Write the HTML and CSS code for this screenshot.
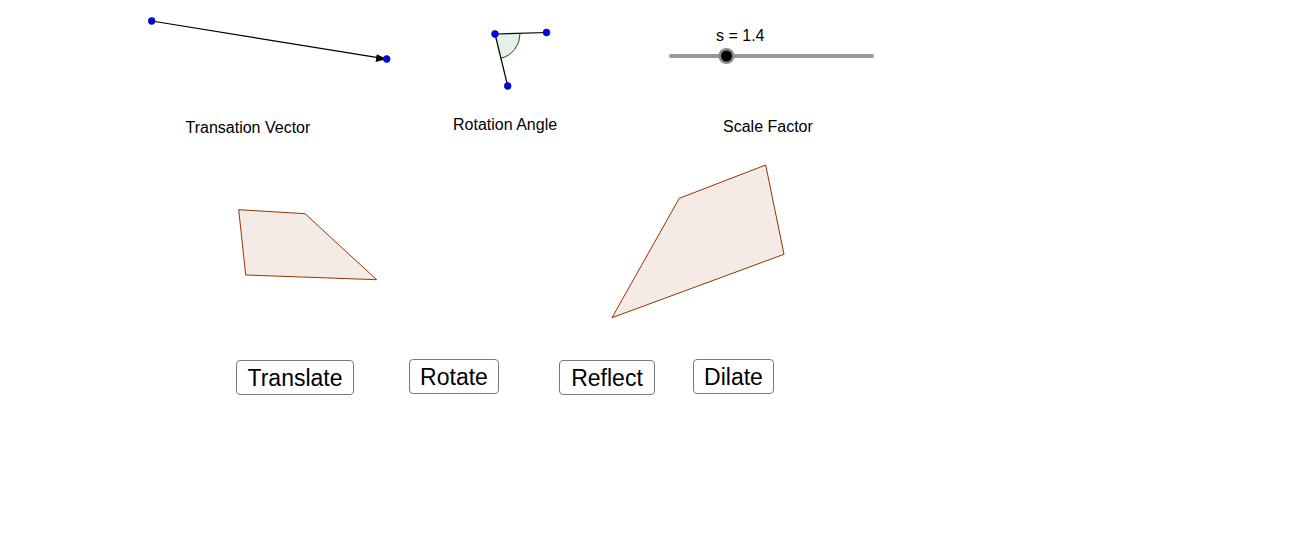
FILE: index.html
```html
<!DOCTYPE html>
<html lang="en">
<head>
    <meta charset="UTF-8">
    <title>Transformations</title>
    <link rel="stylesheet" href="styles.css">
</head>
<body>

    <div class="applet">
        <svg class="canvas" width="1301" height="534" viewBox="0 0 1301 534">
            <!-- vecteur de translation -->
            <line x1="151.7" y1="21" x2="378" y2="57.6" class="seg"/>
            <polygon points="386.7,59 375.6,61.9 376.8,54.3" class="head"/>
            <circle cx="151.7" cy="21" r="3.4" class="pt"/>
            <circle cx="386.7" cy="59" r="3.4" class="pt"/>

            <!-- angle de rotation -->
            <path d="M495,34 L520,33.8 A25,25 0 0 1 500.8,58.3 Z" class="angle-fill"/>
            <path d="M520,33.8 A25,25 0 0 1 500.8,58.3" class="angle-arc"/>
            <line x1="495" y1="34" x2="546.5" y2="32.5" class="seg"/>
            <line x1="495" y1="34" x2="507.7" y2="86" class="seg"/>
            <circle cx="495" cy="34" r="3.4" class="pt"/>
            <circle cx="546.5" cy="32.5" r="3.4" class="pt"/>
            <circle cx="507.7" cy="86" r="3.4" class="pt"/>

            <!-- curseur -->
            <text x="716" y="41" class="lbl">s = 1.4</text>
            <line x1="671" y1="56" x2="872" y2="56" class="track"/>
            <circle cx="726.5" cy="56" r="8" class="knob-halo"/>
            <circle cx="726.5" cy="56" r="5.5" class="knob"/>

            <!-- textes -->
            <text x="185.5" y="132.5" class="lbl">Transation Vector</text>
            <text x="453" y="130" class="lbl">Rotation Angle</text>
            <text x="723" y="132" class="lbl">Scale Factor</text>

            <!-- polygones -->
            <polygon points="238.7,209.7 305,213.7 376.7,279.7 245.7,275" class="poly"/>
            <polygon points="612,317.7 679.3,198.3 765.7,165 784,254.3" class="poly"/>
        </svg>

        <button class="btn btn-translate">Translate</button>
        <button class="btn btn-rotate">Rotate</button>
        <button class="btn btn-reflect">Reflect</button>
        <button class="btn btn-dilate">Dilate</button>
    </div>

</body>
</html>
```

FILE: styles.css
```css
body {
    margin: 0;
    background-color: white;
    font-family: "Liberation Sans", Arial, sans-serif;
}
.applet {
    position: relative;
    width: 1301px;
    height: 534px;
    overflow: hidden;
}
.canvas {
    display: block;
}
.seg {
    stroke: #000;
    stroke-width: 1.2;
}
.head {
    fill: #000;
}
.pt {
    fill: #0000ff;
    stroke: #1a1a66;
    stroke-width: 0.8;
}
.angle-fill {
    fill: #e6f0e6;
}
.angle-arc {
    fill: none;
    stroke: #006400;
    stroke-width: 1;
}
.track {
    stroke: #999;
    stroke-width: 4;
    stroke-linecap: round;
}
.knob-halo {
    fill: #8a8a8a;
}
.knob {
    fill: #000;
}
.lbl {
    font-family: "Liberation Sans", Arial, sans-serif;
    font-size: 16px;
    fill: #000;
}
.poly {
    fill: #f5ebe6;
    stroke: #993300;
    stroke-width: 1;
}

/* boutons posés sur le canevas */
.btn {
    position: absolute;
    height: 35px;
    padding: 2px 0 0 0;
    background-color: white;
    border: 1px solid #7a7a7a;
    border-radius: 4px;
    font-family: "Liberation Sans", Arial, sans-serif;
    font-size: 23px;
    color: #000;
    cursor: pointer;
}
.btn-translate { left: 236px; top: 360px; width: 118px; }
.btn-rotate    { left: 409px; top: 359px; width: 90px; }
.btn-reflect   { left: 559px; top: 360px; width: 96px; }
.btn-dilate    { left: 693px; top: 359px; width: 81px; }
```
